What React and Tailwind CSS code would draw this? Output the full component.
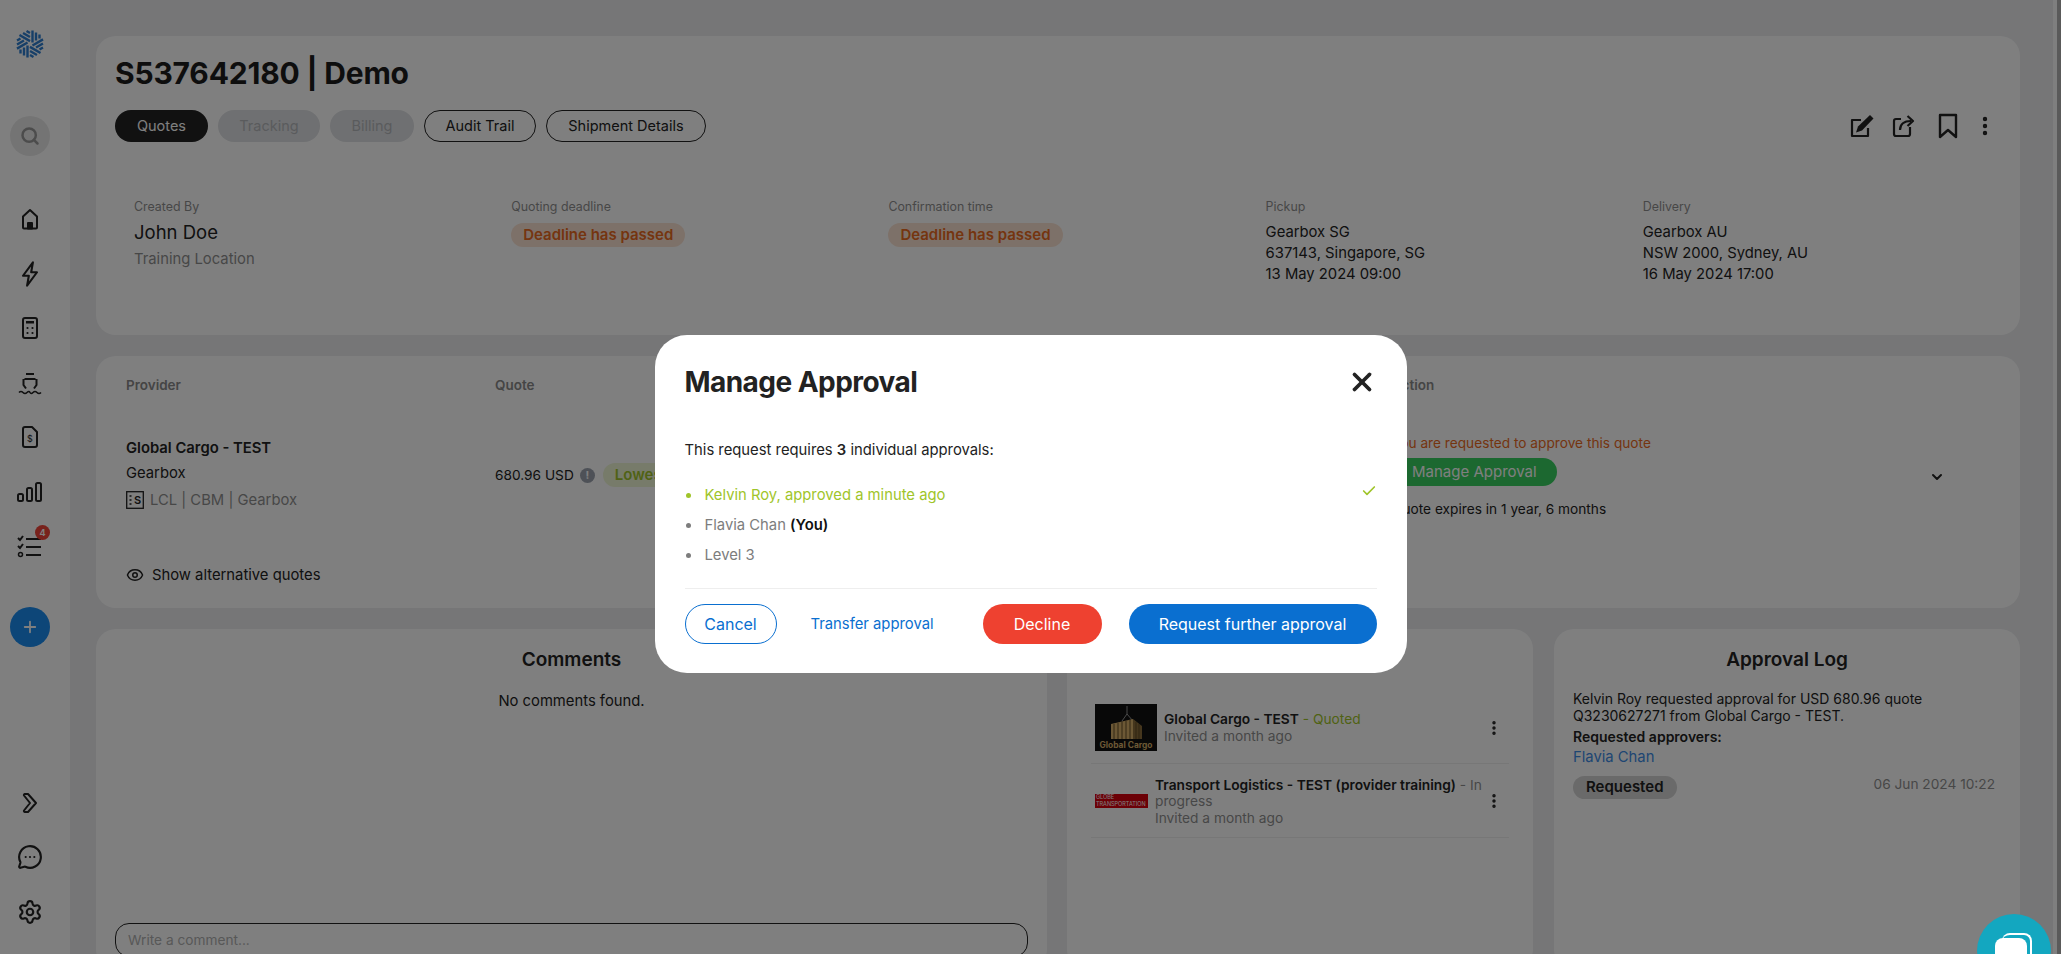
import { Check, Eye, MoreVertical, ChevronDown, MessageCircleMore, Settings, Search, X, Plus } from 'lucide-react';

const Logo = () => (
  <svg viewBox="0 0 28 32" className="w-7 h-8 text-[#2f7fd0]" fill="none" stroke="currentColor" strokeWidth="2.4">
    {[0, 60, 120, 180, 240, 300].map((r) => (
      <path key={r} transform={`rotate(${r} 14 16)`} d="M16.5 2.4 V14.6 M20 4.5 V12.5 M23.5 6.5 V10.5" />
    ))}
  </svg>
);

const HomeIcon = () => (
  <svg viewBox="0 0 24 24" className="w-6 h-6" fill="none" stroke="currentColor" strokeWidth="2" strokeLinejoin="round">
    <path d="M5 20.5 V9.5 L12 3 l7 6.5 V20.5 a1 1 0 0 1 -1 1 H6 a1 1 0 0 1 -1 -1 z" />
    <rect x="10" y="16" width="4" height="5.5" fill="currentColor" />
  </svg>
);

const BoltIcon = () => (
  <svg viewBox="0 0 24 24" className="w-7 h-7" fill="none" stroke="currentColor" strokeWidth="1.8" strokeLinejoin="round">
    <path d="M14.5 2 L6 13.5 h5 L9.5 22 L18 10.5 h-5 z" />
  </svg>
);

const CalcIcon = () => (
  <svg viewBox="0 0 24 24" className="w-6 h-6" fill="none" stroke="currentColor" strokeWidth="2">
    <rect x="5" y="2" width="14" height="20" rx="2" />
    <rect x="8" y="5" width="8" height="2.5" fill="currentColor" stroke="none" />
    <g fill="currentColor" stroke="none">
      <circle cx="9.5" cy="12" r="1.1" /><circle cx="14.5" cy="12" r="1.1" />
      <circle cx="9.5" cy="17" r="1.1" /><circle cx="14.5" cy="17" r="1.1" />
    </g>
  </svg>
);

const ShipIcon = () => (
  <svg viewBox="0 0 24 24" className="w-6 h-6" fill="none" stroke="currentColor" strokeWidth="2">
    <path d="M8 3 h8 M6.5 8 h11 M5.5 8 v6 l2.5 3.5 M18.5 8 v6 l-2.5 3.5" />
    <path d="M1 21.5 q2 -2 4 0 t4 0 t3 0 t3 0 t4 0 t4 0" strokeWidth="1.6" />
  </svg>
);

const FileDollarIcon = () => (
  <svg viewBox="0 0 24 24" className="w-6 h-6" fill="none" stroke="currentColor" strokeWidth="2" strokeLinejoin="round">
    <path d="M5 4 a2 2 0 0 1 2 -2 h7 l5 5 v13 a2 2 0 0 1 -2 2 H7 a2 2 0 0 1 -2 -2 z" />
    <text x="12" y="17" textAnchor="middle" fontSize="9" fill="currentColor" stroke="none" fontFamily="Inter">$</text>
  </svg>
);

const ChartIcon = () => (
  <svg viewBox="0 0 26 24" className="w-[26px] h-6" fill="none" stroke="currentColor" strokeWidth="2">
    <rect x="1" y="14" width="5" height="7" rx="1.5" />
    <rect x="10" y="8" width="5" height="13" rx="1.5" />
    <rect x="19" y="3" width="5" height="18" rx="1.5" />
  </svg>
);

const TasksIcon = () => (
  <svg viewBox="0 0 26 24" className="w-[26px] h-6" fill="none" stroke="currentColor" strokeWidth="2">
    <path d="M9 5 h15 M9 13 h15 M9 21 h15" strokeWidth="2.2" />
    <path d="M1 4 l2 2 l3 -4 M1 12 l2 2 l3 -4" />
    <circle cx="3.5" cy="20.5" r="2" strokeWidth="1.5" />
  </svg>
);

const ChevronsIcon = () => (
  <svg viewBox="0 0 24 24" className="w-6 h-6" fill="none" stroke="currentColor" strokeWidth="2" strokeLinejoin="round">
    <path d="M7 3 h3 l8 9 l-8 9 h-3 a1 1 0 0 1 -1 -1.5 l6 -7.5 l-6 -7.5 a1 1 0 0 1 1 -1.5 z" />
  </svg>
);

const EditIcon = () => (
  <svg viewBox="0 0 24 24" className="w-6 h-6" fill="none" stroke="currentColor" strokeWidth="2.2">
    <path d="M11 6 H2 V22 H18 V14" strokeLinejoin="round" />
    <path d="M20 1 l3.5 3.5 L12 16.5 l-6 2 L8 12.5 z" fill="currentColor" stroke="none" />
  </svg>
);

const ShareIcon = () => (
  <svg viewBox="0 0 24 24" className="w-6 h-6" fill="none" stroke="currentColor" strokeWidth="2.2" strokeLinejoin="round">
    <path d="M10 5 H5 a2 2 0 0 0 -2 2 V20 a2 2 0 0 0 2 2 H17 a2 2 0 0 0 2 -2 V13" />
    <path d="M9 16 c0 -6 4 -9 11 -9" />
    <path d="M16.5 2 L22 7 L16.5 12" />
  </svg>
);

const BookmarkIcon = () => (
  <svg viewBox="0 0 20 26" className="w-5 h-[26px]" fill="none" stroke="currentColor" strokeWidth="2.4" strokeLinejoin="round">
    <path d="M2 2 H18 V24 L10 17 L2 24 z" />
  </svg>
);

const RateIcon = () => (
  <svg viewBox="0 0 18 18" className="w-[18px] h-[18px]" fill="none" stroke="currentColor" strokeWidth="1.3">
    <rect x="0.7" y="0.7" width="16.6" height="16.6" />
    <path d="M3.5 5 h2 M3.5 9 h2 M3.5 13 h2" strokeWidth="1.6" />
    <text x="11.5" y="13" textAnchor="middle" fontSize="11" fontWeight="600" fill="currentColor" stroke="none" fontFamily="Inter">S</text>
  </svg>
);

const GlobalCargoLogo = () => (
  <svg viewBox="0 0 62 47" className="w-[62px] h-[47px] shrink-0">
    <rect width="62" height="47" fill="#111" />
    <path d="M32 2 v8 M27 17 L32 10 L38 17" stroke="#c8c8c8" strokeWidth="0.7" fill="none" />
    <path d="M16 20 L38 15 V35 H16 z" fill="#d8b06a" />
    <path d="M38 15 L47 22 V35 H38 z" fill="#8a6d3b" />
    <path d="M19 20 v15 M23 19 v16 M27 18 v17 M31 17 v18 M35 16 v19 M41 18 v17 M44 20 v15" stroke="#5a4522" strokeWidth="0.9" />
    <text x="31" y="44" textAnchor="middle" fontSize="8.4" fontWeight="700" fill="#d8b06a" fontFamily="Inter">Global Cargo</text>
  </svg>
);

const GlobeLogo = () => (
  <div className="w-[53px] h-[14px] shrink-0 bg-[#d8000c] text-white text-[5.5px] leading-[7px] font-['Inter'] overflow-hidden pl-px">
    GLOBE<br />TRANSPORTATION
  </div>
);

const navIcons = [<HomeIcon />, <BoltIcon />, <CalcIcon />, <ShipIcon />, <FileDollarIcon />, <ChartIcon />];

const details = [
  { label: 'Pickup', lines: ['Gearbox SG', '637143, Singapore, SG', '13 May 2024 09:00'] },
  { label: 'Delivery', lines: ['Gearbox AU', 'NSW 2000, Sydney, AU', '16 May 2024 17:00'] },
];

export default function App() {
  return (
    <div className="relative flex h-screen overflow-hidden bg-[#ecedef] font-['Inter',sans-serif] text-[#222]">
      {/* Sidebar */}
      <aside className="w-[70px] shrink-0 bg-white flex flex-col items-center pt-[28px] pb-[15px] pr-[10px]">
        <Logo />
        <div className="mt-[56px] w-10 h-10 rounded-full bg-[#e9e9e9] flex items-center justify-center text-[#999]">
          <Search size={20} strokeWidth={3} />
        </div>
        <div className="mt-[36px] flex flex-col items-center">
          {navIcons.map((icon, i) => (
            <div key={i} className="h-[54.5px] flex items-center justify-center">{icon}</div>
          ))}
          <div className="relative h-[54.5px] flex items-center justify-center">
            <TasksIcon />
            <span className="absolute top-[6px] -right-[7px] w-[15px] h-[15px] rounded-full bg-[#f04438] text-white text-[9px] font-bold flex items-center justify-center">4</span>
          </div>
        </div>
        <button className="mt-[33px] w-10 h-10 rounded-full bg-[#1a8cf0] text-white flex items-center justify-center">
          <Plus size={18} strokeWidth={2.4} />
        </button>
        <div className="mt-auto flex flex-col items-center">
          <div className="h-[54.5px] flex items-center justify-center"><ChevronsIcon /></div>
          <div className="h-[54.5px] flex items-center justify-center"><MessageCircleMore size={26} strokeWidth={2} /></div>
          <div className="h-[54.5px] flex items-center justify-center"><Settings size={26} strokeWidth={2} /></div>
        </div>
      </aside>

      {/* Main */}
      <main className="flex-1 min-w-0 pl-[26px] pr-[33px] pt-9 flex flex-col gap-[21px]">
        {/* Shipment header */}
        <section className="bg-white rounded-[20px] h-[299px] shrink-0 px-[19px] pt-[17px]">
          <h1 className="text-[30px] leading-10 font-bold tracking-[-0.2px] text-[#1c1c1c]">S537642180 | Demo</h1>
          <div className="mt-[17px] flex items-center justify-between">
            <div className="flex items-center gap-[10px] text-[14.5px]">
              <span className="w-[93px] h-8 rounded-full bg-[#222] text-white flex items-center justify-center">Quotes</span>
              <span className="w-[102px] h-8 rounded-full bg-[#dfe1e4] text-[#b4b7bb] flex items-center justify-center">Tracking</span>
              <span className="w-[84px] h-8 rounded-full bg-[#dfe1e4] text-[#b4b7bb] flex items-center justify-center">Billing</span>
              <span className="w-[112px] h-8 rounded-full border border-[#222] flex items-center justify-center">Audit Trail</span>
              <span className="w-[160px] h-8 rounded-full border border-[#222] flex items-center justify-center">Shipment Details</span>
            </div>
            <div className="flex items-center pr-[4px]">
              <EditIcon />
              <div className="ml-[17px]"><ShareIcon /></div>
              <div className="ml-[23px]"><BookmarkIcon /></div>
              <MoreVertical size={24} strokeWidth={2.4} className="ml-[15px]" />
            </div>
          </div>

          <div className="mt-[57px] grid grid-cols-5">
            <div className="pl-[19px]">
              <div className="text-[12.4px] leading-4 text-[#8f8f8f]">Created By</div>
              <div className="mt-[5px] text-[18.5px] leading-6">John Doe</div>
              <div className="mt-[5px] text-[14.8px] leading-5 text-[#8f8f8f]">Training Location</div>
            </div>
            {['Quoting deadline', 'Confirmation time'].map((label) => (
              <div key={label} className="pl-[19px]">
                <div className="text-[12.4px] leading-4 text-[#8f8f8f]">{label}</div>
                <span className="mt-2 inline-flex h-6 items-center rounded-full bg-[#fbe3d3] px-3 text-[15px] font-semibold text-[#ea6a1e]">Deadline has passed</span>
              </div>
            ))}
            {details.map((d) => (
              <div key={d.label} className="pl-[19px]">
                <div className="text-[12.4px] leading-4 text-[#8f8f8f]">{d.label}</div>
                <div className="mt-[7px] text-[14.8px] leading-[21px]">
                  {d.lines.map((line) => <div key={line}>{line}</div>)}
                </div>
              </div>
            ))}
          </div>
        </section>

        {/* Quote table */}
        <section className="bg-white rounded-[20px] h-[252px] shrink-0 pl-[30px] pt-[21px]">
          <div className="flex text-[13.5px] leading-4 font-semibold text-[#8a8a8a]">
            <div className="w-[369px]">Provider</div>
            <div className="w-[897px]">Quote</div>
            <div>Action</div>
          </div>
          <div className="mt-10 flex items-start">
            <div className="w-[369px] pt-[5px] text-[14.8px]">
              <div className="font-semibold leading-5">Global Cargo - TEST</div>
              <div className="mt-[5px] leading-5">Gearbox</div>
              <div className="mt-[6px] leading-[22px] flex items-center gap-[6px] text-[#8f8f8f]">
                <span className="text-[#222]"><RateIcon /></span>
                LCL | CBM | Gearbox
              </div>
            </div>
            <div className="w-[897px] pt-[30px] flex items-center text-[13.7px] leading-6">
              680.96 USD
              <span className="ml-[6px] w-[15px] h-[15px] rounded-full bg-[#9ca3af] text-white text-[11px] font-bold flex items-center justify-center">!</span>
              <span className="ml-2 h-6 px-3 rounded-full bg-[#eef6d5] text-[#a0c52a] font-semibold flex items-center text-[15px]">Lowest</span>
            </div>
            <div className="flex-1 flex items-start justify-between pr-[75px]">
              <div>
                <div className="text-[13.7px] leading-5 text-[#ea6a1e]">You are requested to approve this quote</div>
                <button className="mt-[5px] h-7 px-5 rounded-full bg-[#38d060] text-white text-[15px]">Manage Approval</button>
                <div className="mt-[13px] text-[13.7px] leading-5">Quote expires in 1 year, 6 months</div>
              </div>
              <ChevronDown size={16} strokeWidth={3} className="mt-[36px]" />
            </div>
          </div>
          <div className="mt-[46px] flex items-center gap-2 text-[14.8px] leading-5">
            <Eye size={18} strokeWidth={2} />
            Show alternative quotes
          </div>
        </section>

        {/* Bottom cards */}
        <div className="flex shrink-0 h-[340px]">
          <section className="w-[951px] bg-white rounded-[20px] pt-[17px] px-[19px] pb-[12px] flex flex-col">
            <h2 className="text-[19px] leading-7 font-semibold text-center">Comments</h2>
            <p className="mt-[17px] text-[14.8px] leading-5 text-center">No comments found.</p>
            <div className="mt-auto h-[34px] rounded-[14px] border-[1.5px] border-[#222] px-3 flex items-center text-[13.7px] text-[#b0b0b0]">Write a comment...</div>
          </section>

          <section className="ml-5 w-[466px] bg-white rounded-[20px] pt-[17px] px-6">
            <h2 className="text-[19px] leading-7 font-semibold text-center">Providers</h2>
            <div className="mt-[18px] h-[72px] border-b border-[#eee] flex items-center pl-[4px] pr-[6px]">
              <GlobalCargoLogo />
              <div className="ml-[7px] flex-1 text-[13.75px] leading-[17px]">
                <div><span className="font-semibold">Global Cargo - TEST</span> <span className="text-[#a0c52a]">- Quoted</span></div>
                <div className="text-[#8f8f8f]">Invited a month ago</div>
              </div>
              <MoreVertical size={18} strokeWidth={2.6} />
            </div>
            <div className="h-[74px] border-b border-[#eee] flex items-center pl-[4px] pr-[6px]">
              <GlobeLogo />
              <div className="ml-[7px] flex-1 mt-[2px] text-[13.75px] leading-[16.5px] text-[#8f8f8f]">
                <div><span className="font-semibold text-[#222]">Transport Logistics - TEST (provider training)</span> - In progress</div>
                <div>Invited a month ago</div>
              </div>
              <MoreVertical size={18} strokeWidth={2.6} />
            </div>
          </section>

          <section className="ml-[21px] w-[466px] bg-white rounded-[20px] pt-[17px] pl-[19px] pr-[25px]">
            <h2 className="text-[19px] leading-7 font-semibold text-center pl-[6px]">Approval Log</h2>
            <p className="mt-[16px] text-[14px] leading-[17px]">Kelvin Roy requested approval for USD 680.96 quote Q3230627271 from Global Cargo - TEST.</p>
            <div className="mt-[4px] text-[14px] leading-[17px] font-semibold">Requested approvers:</div>
            <div className="mt-[2px] text-[14.8px] leading-5 text-[#3d8ce6]">Flavia Chan</div>
            <div className="mt-[9px] flex items-start justify-between">
              <span className="h-[23px] px-[13px] rounded-full bg-[#d4d4d4] text-[15px] font-semibold flex items-center">Requested</span>
              <span className="text-[13.7px] leading-4 text-[#8f8f8f]">06 Jun 2024 10:22</span>
            </div>
          </section>
        </div>
      </main>

      {/* Scrollbar gutter */}
      <div className="w-2 shrink-0 flex">
        <div className="w-1 bg-white" />
        <div className="w-1 bg-[#b4b4b4]" />
      </div>

      {/* Dialog */}
      <div className="fixed inset-0 bg-black/50 flex justify-center pt-[335px]">
        <div className="w-[752px] h-[338px] bg-white rounded-[32px] pl-[30px] pr-[30px] pt-[29px]">
          <div className="flex items-center justify-between h-9">
            <h2 className="text-[28px] leading-9 font-bold tracking-[-0.55px] text-[#222]">Manage Approval</h2>
            <X size={30} strokeWidth={3} />
          </div>
          <p className="mt-[40px] text-[14.8px] leading-5">This request requires <b className="font-semibold">3</b> individual approvals:</p>
          <ul className="mt-[25px] text-[14.8px] leading-5 text-[#7d7d7d]">
            <li className="flex items-start h-[30px] text-[#a0c52a]">
              <span className="w-[5px] h-[5px] mt-2 ml-[1px] rounded-full bg-current" />
              <span className="ml-[14px] flex-1">Kelvin Roy, approved a minute ago</span>
              <Check size={16} strokeWidth={2.5} className="mr-0 -mt-[2px]" />
            </li>
            <li className="flex items-start h-[30px]">
              <span className="w-[5px] h-[5px] mt-2 ml-[1px] rounded-full bg-current" />
              <span className="ml-[14px]">Flavia Chan <b className="font-semibold text-[#111]">(You)</b></span>
            </li>
            <li className="flex items-start h-[22px]">
              <span className="w-[5px] h-[5px] mt-2 ml-[1px] rounded-full bg-current" />
              <span className="ml-[14px]">Level 3</span>
            </li>
          </ul>
          <div className="mt-[21px] border-t border-[#eee] pt-[15px] flex items-center justify-between">
            <div className="flex items-center">
              <button className="w-[92px] h-10 rounded-full border-[1.5px] border-[#0a6fd0] text-[16px] text-[#0a6fd0]">Cancel</button>
              <span className="ml-[34px] text-[14.8px] text-[#0a6fd0]">Transfer approval</span>
            </div>
            <div className="flex items-center gap-[27px]">
              <button className="w-[119px] h-10 rounded-full bg-[#ee4130] text-[16px] text-white">Decline</button>
              <button className="w-[248px] h-10 rounded-full bg-[#0a6fd0] text-[16px] text-white">Request further approval</button>
            </div>
          </div>
        </div>
      </div>

      {/* Chat launcher sits above the dimmed page */}
      <div className="absolute left-[1977px] top-[914px] w-[74px] h-[74px] rounded-full bg-[#13a7c0]">
        <div className="absolute left-[25px] top-[19px] w-[30px] h-[30px] rounded-[8px] border-t-2 border-r-2 border-white" />
        <div className="absolute left-[18px] top-[24px] w-[32px] h-[32px] rounded-[8px] bg-white" />
      </div>
    </div>
  );
}
